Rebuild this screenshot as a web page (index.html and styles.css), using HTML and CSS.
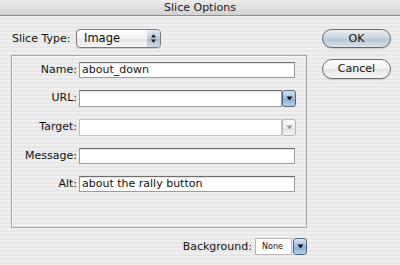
FILE: index.html
```html
<!DOCTYPE html>
<html>
<head>
<meta charset="utf-8">
<link rel="stylesheet" href="styles.css">
</head>
<body>
<div class="window">
  <div class="titlebar">Slice Options</div>
  <div class="main">
    <div class="left">
      <div class="typerow">
        <span class="typelabel">Slice Type:</span>
        <div class="popup">
          <span class="popup-text">Image</span>
          <span class="popup-arrows">
            <svg width="7" height="11" viewBox="0 0 7 11"><path d="M3.5 1 L6 4.5 L1 4.5 Z M1 6.5 L6 6.5 L3.5 10 Z" fill="#222"/></svg>
          </span>
        </div>
      </div>
      <div class="group">
        <div class="frow">
          <span class="flabel">Name:</span>
          <div class="field">about_down</div>
        </div>
        <div class="frow">
          <span class="flabel">URL:</span>
          <div class="combo">
            <div class="combo-field"></div>
            <div class="combo-btn">
              <svg width="7" height="5" viewBox="0 0 7 5"><path d="M0.5 0.5 L6.5 0.5 L3.5 4.5 Z" fill="#111"/></svg>
            </div>
          </div>
        </div>
        <div class="frow">
          <span class="flabel">Target:</span>
          <div class="combo disabled">
            <div class="combo-field"></div>
            <div class="combo-btn">
              <svg width="7" height="5" viewBox="0 0 7 5"><path d="M0.5 0.5 L6.5 0.5 L3.5 4.5 Z" fill="#9a9a9a"/></svg>
            </div>
          </div>
        </div>
        <div class="frow">
          <span class="flabel">Message:</span>
          <div class="field"></div>
        </div>
        <div class="frow">
          <span class="flabel">Alt:</span>
          <div class="field">about the rally button</div>
        </div>
      </div>
      <div class="bgrow">
        <span class="bglabel">Background:</span>
        <div class="bgpopup">
          <div class="bgfield">None</div>
          <div class="combo-btn bgbtn">
            <svg width="7" height="5" viewBox="0 0 7 5"><path d="M0.5 0.5 L6.5 0.5 L3.5 4.5 Z" fill="#111"/></svg>
          </div>
        </div>
      </div>
    </div>
    <div class="right">
      <div class="btn default">OK</div>
      <div class="btn">Cancel</div>
    </div>
  </div>
</div>
</body>
</html>
```
FILE: styles.css
```css
html, body {
  margin: 0;
  padding: 0;
}
body {
  width: 400px;
  height: 265px;
  overflow: hidden;
  font-family: "DejaVu Sans", "Liberation Sans", sans-serif;
  font-size: 11px;
  color: #111;
}
.window {
  width: 400px;
  height: 265px;
  background: repeating-linear-gradient(to bottom, #efefef 0, #efefef 2px, #e7e7e7 2px, #e7e7e7 4px);
}
.titlebar {
  height: 15px;
  line-height: 16px;
  text-align: center;
  color: #1a1a1a;
  background: linear-gradient(to bottom, #ececec, #d2d2d2);
  border-bottom: 1px solid #8f8f8f;
}
.main {
  display: flex;
  padding: 13px 0 0 11px;
}
.left {
  width: 296px;
}
.right {
  margin-left: 15px;
  width: 69px;
  display: flex;
  flex-direction: column;
  gap: 11px;
}
.typerow {
  display: flex;
  align-items: center;
  height: 19px;
}
.typelabel {
  padding-left: 1px;
  width: 64px;
}
.popup {
  display: flex;
  width: 85px;
  height: 19px;
  box-sizing: border-box;
  border: 1px solid #7d7d7d;
  border-radius: 4px;
  background: linear-gradient(to bottom, #ffffff, #f2f2f2 50%, #e4e4e4 51%, #f6f6f6);
  overflow: hidden;
  box-shadow: 0 1px 1px rgba(0,0,0,0.15);
}
.popup-text {
  flex: 1;
  padding-left: 7px;
  line-height: 17px;
  font-size: 11.5px;
}
.popup-arrows {
  width: 13px;
  display: flex;
  align-items: center;
  justify-content: center;
  background: linear-gradient(to bottom, #e4ebf4, #bccbdc 50%, #a8b9cd 51%, #d0dbe8);
}
.group {
  margin-top: 7px;
  height: 173px;
  box-sizing: border-box;
  border: 1px solid #a6a6a6;
  box-shadow: inset 1px 1px 0 #f8f8f8;
  padding-top: 6px;
  display: grid;
  grid-template-columns: 65px 216px;
  column-gap: 2px;
  row-gap: 12px;
  align-content: start;
}
.frow {
  display: contents;
}
.flabel {
  text-align: right;
  height: 16px;
  line-height: 16px;
}
.field {
  height: 16px;
  box-sizing: border-box;
  border: 1px solid #9c9c9c;
  border-top-color: #6f6f6f;
  background: #fff;
  box-shadow: inset 0 1px 1px rgba(0,0,0,0.12);
  padding-left: 2px;
  line-height: 14px;
  white-space: nowrap;
}
.combo {
  display: flex;
  width: 217px;
  height: 17px;
}
.combo-field {
  flex: 1;
  box-sizing: border-box;
  border: 1px solid #9c9c9c;
  border-top-color: #6f6f6f;
  background: #fff;
  box-shadow: inset 0 1px 1px rgba(0,0,0,0.12);
}
.combo-btn {
  width: 14px;
  box-sizing: border-box;
  border: 1px solid #4f6580;
  border-radius: 3px;
  background: linear-gradient(to bottom, #d9e6f4, #9cbbe0 50%, #84a8d6 51%, #b9d2ee);
  display: flex;
  align-items: center;
  justify-content: center;
}
.combo.disabled .combo-field {
  border-color: #c4c4c4;
  box-shadow: none;
}
.combo.disabled .combo-btn {
  border-color: #b4b4b4;
  background: linear-gradient(to bottom, #fafafa, #ececec 50%, #e2e2e2 51%, #f2f2f2);
}
.bgrow {
  margin-top: 10px;
  display: flex;
  justify-content: flex-end;
  align-items: center;
  height: 17px;
}
.bglabel {
  margin-right: 3px;
}
.bgpopup {
  display: flex;
  height: 17px;
}
.bgfield {
  width: 37px;
  box-sizing: border-box;
  border: 1px solid #b8b8b8;
  background: #fff;
  font-size: 8px;
  line-height: 15px;
  text-align: center;
  padding-right: 2px;
}
.bgbtn {
  margin-left: 1px;
}
.btn {
  height: 19px;
  box-sizing: border-box;
  border: 1px solid #6e6e6e;
  border-radius: 10px;
  text-align: center;
  line-height: 17px;
  background: linear-gradient(to bottom, #ffffff, #f1f1f1 50%, #e2e2e2 51%, #f8f8f8);
  box-shadow: 0 1px 1px rgba(0,0,0,0.15);
}
.btn.default {
  border-color: #5f6c7a;
  background: linear-gradient(to bottom, #e9eef4, #c8d3de 50%, #b5c3d2 51%, #dbe4ee);
}
.right .btn:nth-child(2) {
  height: 20px;
  line-height: 18px;
}
```
